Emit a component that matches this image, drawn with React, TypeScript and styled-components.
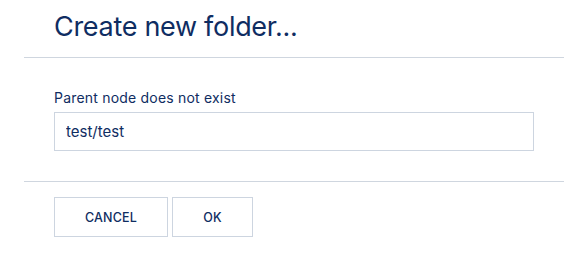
import styled, { createGlobalStyle } from "styled-components";

const GlobalStyle = createGlobalStyle`
  body {
    margin: 0;
    background: #ffffff;
    font-family: Inter, "Liberation Sans", sans-serif;
    color: #0f2d62;
  }
`;

const Dialog = styled.div`
  width: 587px;
  height: 258px;
  padding: 0 23px 0 24px;
  box-sizing: border-box;
`;

const Header = styled.header`
  padding: 8px 0 0 30px;
  height: 58px;
  box-sizing: border-box;
  border-bottom: 1px solid #cfd6df;
`;

const Title = styled.h1`
  margin: 0;
  font-size: 27px;
  font-weight: 400;
  letter-spacing: -0.3px;
  line-height: 38px;
  color: #0f2d62;
`;

const Body = styled.section`
  padding: 31px 30px 30px 30px;
  border-bottom: 1px solid #cfd6df;
  display: flex;
  flex-direction: column;
  gap: 5px;
`;

const Label = styled.label`
  font-size: 14px;
  letter-spacing: 0.2px;
  line-height: 18px;
  color: #0f2d62;
`;

const Input = styled.input`
  height: 39px;
  box-sizing: border-box;
  border: 1px solid #cdd5e0;
  padding: 0 11px;
  font-family: inherit;
  font-size: 15px;
  color: #0f2d62;
  outline: none;
`;

const Footer = styled.footer`
  display: flex;
  gap: 4px;
  padding: 15px 30px 0 30px;
`;

const Button = styled.button<{ $width: number }>`
  width: ${(p) => p.$width}px;
  height: 40px;
  box-sizing: border-box;
  border: 1px solid #cdd5e0;
  background: #ffffff;
  font-family: inherit;
  font-size: 12.5px;
  font-weight: 500;
  letter-spacing: 0.2px;
  text-transform: uppercase;
  color: #0f2d62;
  cursor: pointer;
`;

export default function App() {
  return (
    <>
      <GlobalStyle />
      <Dialog>
        <Header>
          <Title>Create new folder...</Title>
        </Header>
        <Body>
          <Label htmlFor="folder">Parent node does not exist</Label>
          <Input id="folder" defaultValue="test/test" />
        </Body>
        <Footer>
          <Button $width={114}>Cancel</Button>
          <Button $width={81}>OK</Button>
        </Footer>
      </Dialog>
    </>
  );
}
